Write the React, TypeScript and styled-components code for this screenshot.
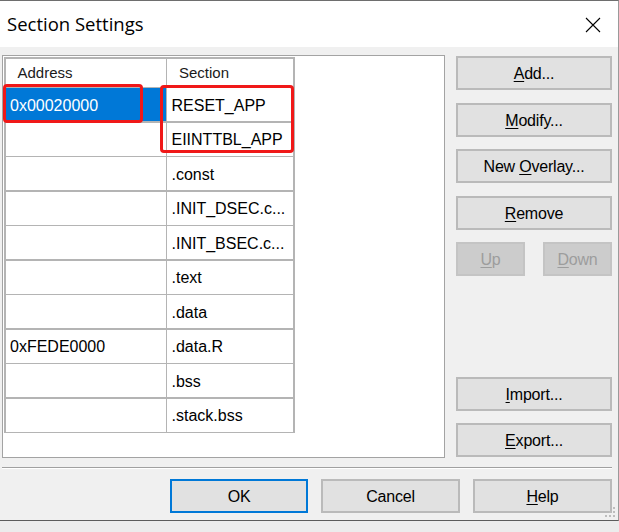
import React from 'react';
import styled, { createGlobalStyle } from 'styled-components';

const GlobalStyle = createGlobalStyle`
  html, body {
    margin: 0;
    padding: 0;
    background: #ececec;
  }
  * {
    box-sizing: border-box;
  }
`;

const Window = styled.div`
  position: relative;
  width: 619px;
  height: 521px;
  background: #f0f0f0;
  border-top: 1px solid #6e6e6e;
  border-right: 1px solid #9a9a9a;
  border-bottom: 1px solid #5c5c5c;
  box-shadow: 0 2px 5px rgba(0, 0, 0, 0.18);
  display: flex;
  flex-direction: column;
  font-family: "Liberation Sans", Arial, sans-serif;
  color: #000;
`;

const TitleBar = styled.div`
  height: 46px;
  background: #fff;
  display: flex;
  align-items: center;
  justify-content: space-between;
  padding: 0 17px 0 7px;
`;

const Title = styled.div`
  font-family: "Open Sans", "Noto Sans", sans-serif;
  font-size: 18.5px;
  margin-top: -2px;
`;

const CloseIcon = styled.svg`
  width: 16px;
  height: 16px;
  margin-top: 1px;
`;

const Body = styled.div`
  flex: 1;
  display: flex;
  flex-direction: column;
  padding: 8px 6px 7px 2px;
`;

const MainRow = styled.div`
  display: flex;
  gap: 11px;
  height: 403px;
`;

const ListPanel = styled.div`
  position: relative;
  width: 443px;
  background: #fff;
  border: 1px solid #a3a3a3;
`;

const Grid = styled.div`
  display: grid;
  grid-template-columns: 160px 126px;
  grid-template-rows: 28px;
  grid-auto-rows: 33px;
  gap: 1.5px;
  padding: 1.5px;
  margin: 1px 0 0 1px;
  width: max-content;
  background: #b4b4b4;
`;

const HeaderCell = styled.div`
  background: #fff;
  display: flex;
  align-items: center;
  padding-left: 12px;
  font-size: 15px;
  color: #1a1a1a;
`;

const Cell = styled.div<{ $selected?: boolean }>`
  background: ${p => (p.$selected ? '#0078d7' : '#fff')};
  color: ${p => (p.$selected ? '#fff' : '#000')};
  display: flex;
  align-items: center;
  padding: 2px 0 0 4.5px;
  font-size: 16px;
  white-space: nowrap;
  overflow: hidden;
`;

const Highlight = styled.div<{ $left: number; $top: number; $w: number; $h: number }>`
  position: absolute;
  left: ${p => p.$left}px;
  top: ${p => p.$top}px;
  width: ${p => p.$w}px;
  height: ${p => p.$h}px;
  border: 3px solid #f01818;
  border-radius: 4px;
  pointer-events: none;
`;

const ButtonColumn = styled.div`
  width: 156px;
  display: flex;
  flex-direction: column;
  gap: 12.5px;
  padding: 1px 0;
`;

const ButtonPair = styled.div`
  display: flex;
  justify-content: space-between;
`;

const Spacer = styled.div`
  flex: 1;
`;

const Button = styled.button<{ $primary?: boolean; $w?: number }>`
  width: ${p => (p.$w ? `${p.$w}px` : '100%')};
  height: 34px;
  padding: 2px 0 0;
  background: #e1e1e1;
  border: ${p => (p.$primary ? '2px solid #0078d7' : '2px solid #bababa')};
  font-family: "Liberation Sans", Arial, sans-serif;
  font-size: 16px;
  letter-spacing: -0.2px;
  color: #000;
  display: flex;
  align-items: center;
  justify-content: center;

  u {
    text-decoration-thickness: 1px;
    text-underline-offset: 2px;
  }

  &:disabled {
    background: #cccccc;
    border-color: #c4c4c4;
    color: #9d9d9d;
  }
`;

const Separator = styled.div`
  margin-top: 9px;
  height: 2px;
  border-top: 1px solid #a0a0a0;
  border-bottom: 1px solid #fff;
`;

const Footer = styled.div`
  margin-top: 10px;
  display: flex;
  justify-content: flex-end;
  gap: 13px;
`;

const Grip = styled.svg`
  position: absolute;
  right: 2px;
  bottom: 2px;
  width: 12px;
  height: 12px;
`;

interface Row {
  address: string;
  section: string;
  selected?: boolean;
}

const rows: Row[] = [
  { address: '0x00020000', section: 'RESET_APP', selected: true },
  { address: '', section: 'EIINTTBL_APP' },
  { address: '', section: '.const' },
  { address: '', section: '.INIT_DSEC.c...' },
  { address: '', section: '.INIT_BSEC.c...' },
  { address: '', section: '.text' },
  { address: '', section: '.data' },
  { address: '0xFEDE0000', section: '.data.R' },
  { address: '', section: '.bss' },
  { address: '', section: '.stack.bss' },
];

const App: React.FC = () => {
  return (
    <>
      <GlobalStyle />
      <Window>
        <TitleBar>
          <Title>Section Settings</Title>
          <CloseIcon viewBox="0 0 16 16">
            <path d="M1 1 L15 15 M15 1 L1 15" stroke="#000" strokeWidth="1.1" fill="none" />
          </CloseIcon>
        </TitleBar>

        <Body>
          <MainRow>
            <ListPanel>
              <Grid>
                <HeaderCell>Address</HeaderCell>
                <HeaderCell>Section</HeaderCell>
                {rows.map((row, i) => (
                  <React.Fragment key={i}>
                    <Cell $selected={row.selected}>{row.address}</Cell>
                    <Cell>{row.section}</Cell>
                  </React.Fragment>
                ))}
              </Grid>
              <Highlight $left={0} $top={28} $w={140} $h={39} />
              <Highlight $left={157} $top={29} $w={134} $h={68} />
            </ListPanel>

            <ButtonColumn>
              <Button><u>A</u>dd...</Button>
              <Button><u>M</u>odify...</Button>
              <Button>New&nbsp;<u>O</u>verlay...</Button>
              <Button><u>R</u>emove</Button>
              <ButtonPair>
                <Button $w={69} disabled><u>U</u>p</Button>
                <Button $w={69} disabled><u>D</u>own</Button>
              </ButtonPair>
              <Spacer />
              <Button><u>I</u>mport...</Button>
              <Button><u>E</u>xport...</Button>
            </ButtonColumn>
          </MainRow>

          <Separator />

          <Footer>
            <Button $primary $w={138}>OK</Button>
            <Button $w={139}>Cancel</Button>
            <Button $w={139}><u>H</u>elp</Button>
          </Footer>
        </Body>

        <Grip viewBox="0 0 12 12">
          {[
            [10, 2], [10, 6], [6, 6], [10, 10], [6, 10], [2, 10],
          ].map(([x, y], i) => (
            <rect key={i} x={x - 1} y={y - 1} width="2" height="2" fill="#bdbdbd" />
          ))}
        </Grip>
      </Window>
    </>
  );
};

export default App;
